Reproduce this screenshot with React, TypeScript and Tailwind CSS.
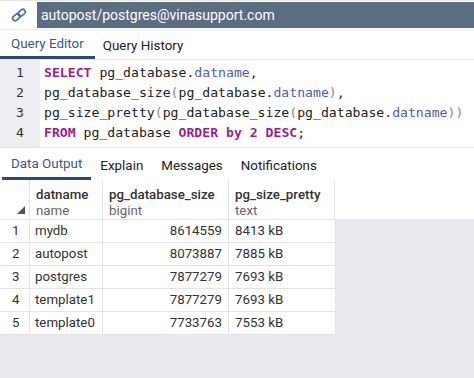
import React from 'react';

type Row = { n: number; name: string; size: string; pretty: string };

const rows: Row[] = [
  { n: 1, name: 'mydb', size: '8614559', pretty: '8413 kB' },
  { n: 2, name: 'autopost', size: '8073887', pretty: '7885 kB' },
  { n: 3, name: 'postgres', size: '7877279', pretty: '7693 kB' },
  { n: 4, name: 'template1', size: '7877279', pretty: '7693 kB' },
  { n: 5, name: 'template0', size: '7733763', pretty: '7553 kB' },
];

const K = ({ children }: { children: React.ReactNode }) => (
  <span className="font-bold text-[#9a1f8c]">{children}</span>
);
const F = ({ children }: { children: React.ReactNode }) => (
  <span className="text-[#4f5ea6]">{children}</span>
);
const P = ({ children }: { children: React.ReactNode }) => (
  <span className="text-[#8a8a8a]">{children}</span>
);

function LinkIcon() {
  return (
    <svg width="18" height="18" viewBox="0 0 18 18" fill="none" stroke="#3d6fb8" strokeWidth="1.6">
      <g transform="rotate(-40 9 9)">
        <rect x="1.5" y="6.5" width="8" height="5" rx="2.5" />
        <rect x="8.5" y="6.5" width="8" height="5" rx="2.5" />
      </g>
    </svg>
  );
}

export default function App() {
  return (
    <div className="w-[474px] h-[378px] overflow-hidden bg-white flex flex-col font-['Roboto',sans-serif] text-[#222]">
      {/* connection bar */}
      <div className="h-[30px] flex border-t border-[#e8e8e8] border-b border-b-[#ececec]">
        <div className="w-[37px] flex items-center justify-center">
          <LinkIcon />
        </div>
        <div className="flex-1 mt-[1px] h-[26px] bg-[#5b6d81] text-white text-[14px] flex items-center pl-[4px]">
          autopost/postgres@vinasupport.com
        </div>
      </div>

      {/* editor tabs */}
      <div className="h-[30px] flex items-stretch border-b border-[#e2e2e2] text-[13.4px]">
        <div className="px-[11px] flex items-center border-b-[3px] border-[#2d4a6a] text-[#36598a] pt-[3px]">
          Query Editor
        </div>
        <div className="px-[8px] flex items-center pt-[3px]">Query History</div>
      </div>

      {/* code */}
      <div className="h-[88px] flex border-b border-[#e4e4e4] font-['DejaVu_Sans_Mono',monospace] text-[13.15px]">
        <div className="w-[40px] bg-[#eceef2] pt-[3px] text-[#333]">
          {[1, 2, 3, 4].map((n) => (
            <div key={n} className="h-[20px] leading-[20px] text-right pr-[16px]">
              {n}
            </div>
          ))}
        </div>
        <div className="pl-[4px] pt-[3px] text-[#222] whitespace-pre">
          <div className="h-[20px] leading-[20px]">
            <K>SELECT</K> pg_database.<F>datname</F>,
          </div>
          <div className="h-[20px] leading-[20px]">
            pg_database_size<P>(</P>pg_database.<F>datname</F>
            <P>)</P>,
          </div>
          <div className="h-[20px] leading-[20px]">
            pg_size_pretty<P>(</P>pg_database_size<P>(</P>pg_database.<F>datname</F>
            <P>))</P>
          </div>
          <div className="h-[20px] leading-[20px]">
            <K>FROM</K> pg_database <K>ORDER</K> <K>by</K> <K>2</K> <K>DESC</K>;
          </div>
        </div>
      </div>

      {/* result tabs */}
      <div className="h-[32px] flex items-stretch text-[13.4px] pl-[2px]">
        <div className="px-[9px] flex items-center border-b-[3px] border-[#2d4a6a] text-[#36598a] pt-[4px]">
          Data Output
        </div>
        <div className="px-[9px] flex items-center pt-[4px]">Explain</div>
        <div className="px-[9px] flex items-center pt-[4px]">Messages</div>
        <div className="px-[9px] flex items-center pt-[4px]">Notifications</div>
      </div>

      {/* grid */}
      <div className="flex-1 bg-[#e9eaf0] flex flex-col text-[13.3px]">
        <div className="h-[40px] bg-white flex border-b border-[#e4e4e4]">
          <div className="w-[30px] border-r border-[#e4e4e4] relative">
            <svg className="absolute left-[17px] top-[26px]" width="8" height="8" viewBox="0 0 8 8">
              <polygon points="8,0 8,8 0,8" fill="#555" />
            </svg>
          </div>
          {[
            { w: 'w-[73px]', a: 'datname', b: 'name' },
            { w: 'w-[126px]', a: 'pg_database_size', b: 'bigint' },
            { w: 'w-[106px]', a: 'pg_size_pretty', b: 'text' },
          ].map((c) => (
            <div key={c.a} className={`${c.w} border-r border-[#e4e4e4] pl-[6px] pt-[7px] leading-[16px]`}>
              <div className="font-medium text-[#333]">{c.a}</div>
              <div className="text-[#666]">{c.b}</div>
            </div>
          ))}
        </div>
        {rows.map((r) => (
          <div key={r.n} className="w-[336px] h-[23px] bg-white flex border-b border-[#e4e4e4] text-[#333]">
            <div className="w-[30px] border-r border-[#e4e4e4] pl-[12px] flex items-center">{r.n}</div>
            <div className="w-[73px] border-r border-[#e4e4e4] pl-[5px] flex items-center">{r.name}</div>
            <div className="w-[126px] border-r border-[#e4e4e4] pr-[6px] flex items-center justify-end">{r.size}</div>
            <div className="w-[107px] border-r border-[#e4e4e4] pl-[6px] flex items-center">{r.pretty}</div>
          </div>
        ))}
      </div>
    </div>
  );
}
